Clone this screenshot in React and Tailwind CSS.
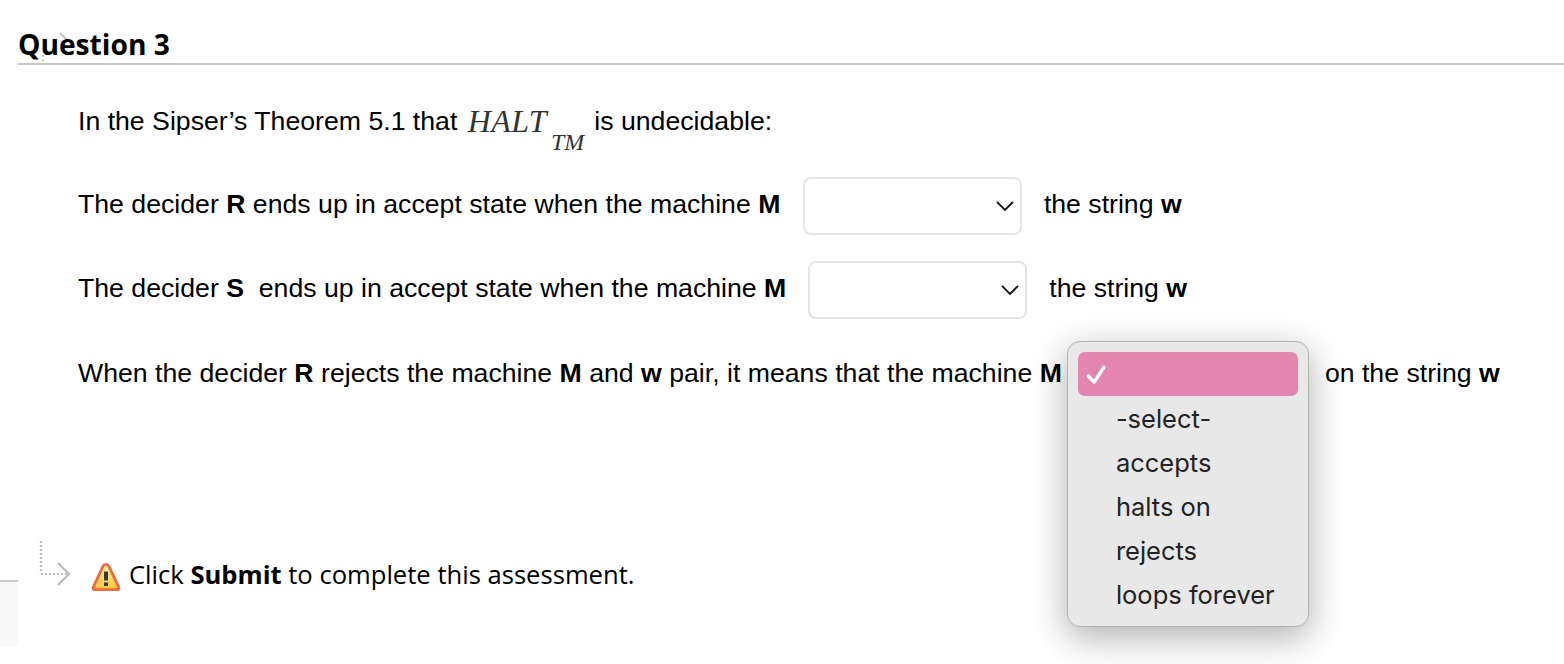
import { useState } from 'react'

const OPTIONS = ['', '-select-', 'accepts', 'halts on', 'rejects', 'loops forever']

function Chevron() {
  return (
    <svg width="18" height="12" viewBox="0 0 18 12" fill="none" className="mr-[6px]">
      <path d="M1 1.8 9 9.8 17 1.8" stroke="#111" strokeWidth="1.9" />
    </svg>
  )
}

function SelectBox() {
  return (
    <button
      type="button"
      className="flex h-[58px] w-[219px] shrink-0 items-center justify-end rounded-[8px] border-2 border-[#e4e4e4] bg-white"
    >
      <Chevron />
    </button>
  )
}

function OptionMenu({ options, selected, onSelect }) {
  return (
    <ul className="absolute top-[-17px] left-0 h-[286px] w-[242px] rounded-[13px] border border-[#b4b4b4] bg-[#e8e8e8] px-[10px] py-[10px] font-['Inter',sans-serif] text-[25.5px] text-[#232323] shadow-[0_10px_36px_rgba(0,0,0,0.32)]">
      {options.map((label) => (
        <li
          key={label}
          onClick={() => onSelect(label)}
          className={`flex h-[44px] items-center rounded-[7px] pt-[2px] whitespace-nowrap ${label === selected ? 'bg-[#e385b1] text-white' : ''}`}
        >
          <span className="flex w-[38px] shrink-0 pl-[8px]">
            {label === selected && (
              <svg width="20" height="20" viewBox="0 0 20 20" fill="none">
                <path
                  d="M2.4 11 8 17.2 18 2.3"
                  stroke="#fff"
                  strokeWidth="3.4"
                  strokeLinecap="round"
                  strokeLinejoin="round"
                />
              </svg>
            )}
          </span>
          {label}
        </li>
      ))}
    </ul>
  )
}

function FlowArrow() {
  return (
    <svg width="32" height="46" viewBox="0 0 32 46" fill="none" stroke="#bcbcbc">
      <path d="M2 0V33" strokeWidth="2.4" strokeDasharray="2 2" />
      <path d="M2 33H29" strokeWidth="2" strokeDasharray="2 2" />
      <path d="M19 22 30 33 19 44" strokeWidth="2.2" />
    </svg>
  )
}

function WarningIcon() {
  return (
    <svg width="30" height="30" viewBox="0 0 30 30">
      <defs>
        <linearGradient id="warn" x1="0" y1="0" x2="0" y2="1">
          <stop offset="0" stopColor="#fff0a0" />
          <stop offset="1" stopColor="#fbc638" />
        </linearGradient>
      </defs>
      <path
        d="M15 2.4Q17 2.4 18 4.4L27.8 25.3Q28.5 27.6 26.3 27.6H3.7Q1.5 27.6 2.2 25.3L12 4.4Q13 2.4 15 2.4Z"
        fill="url(#warn)"
        stroke="#f2683f"
        strokeWidth="2.8"
        strokeLinejoin="round"
      />
      <path d="M13 9.5H17V18.5H13ZM13 20.5H17V24H13Z" fill="#333b3d" />
    </svg>
  )
}

export default function App() {
  const [answer, setAnswer] = useState('')

  return (
    <div className="relative h-[664px] w-[1564px] overflow-hidden bg-white font-['Liberation_Sans',Arial,sans-serif] text-[26.66px] leading-[30px] text-black">
      <svg className="absolute top-[31px] left-[41px]" width="32" height="32" fill="none" stroke="#c4c4c4">
        <path d="M2 24V32" strokeWidth="1.8" strokeDasharray="2 2" />
        <path d="M19 2 27 10" strokeWidth="2.2" />
      </svg>
      <header className="relative ml-[18px] h-[65px] border-b-2 border-[#c9c9c9] pt-[24px]">
        <h1 className="font-['Open_Sans','Noto_Sans',sans-serif] text-[28.2px] leading-[40px] font-bold">Question 3</h1>
      </header>

      <main className="ml-[78px] whitespace-pre">
        <p className="flex h-[112px] items-start pt-[41px]">
          <span>In the Sipser’s Theorem 5.1 that </span>
          <span className="ml-[3px] flex font-['Liberation_Serif',serif] text-[#333] italic">
            <span className="text-[32px] tracking-[0.4px]">HALT</span>
            <span className="mt-[21px] ml-[4px] text-[24px]">TM</span>
          </span>
          <span className="ml-[10px]">is undecidable:</span>
        </p>

        <div className="flex h-[58px] items-center">
          <span className="-mt-[4px]">The decider <b>R</b> ends up in accept state when the machine <b>M</b></span>
          <span className="w-[22.5px]" />
          <SelectBox />
          <span className="-mt-[4px] ml-[22px]">the string <b>w</b></span>
        </div>

        <div className="mt-[26px] flex h-[58px] items-center">
          <span className="-mt-[4px]">The decider <b>S</b>  ends up in accept state when the machine <b>M</b></span>
          <span className="w-[22px]" />
          <SelectBox />
          <span className="-mt-[4px] ml-[22px]">the string <b>w</b></span>
        </div>

        <div className="mt-[39px] flex h-[30px] items-center">
          <span>When the decider <b>R</b> rejects the machine <b>M</b> and <b>w</b> pair, it means that the machine <b>M</b></span>
          <div className="relative z-10 ml-[5px] h-[30px] w-[242px] shrink-0">
            <OptionMenu options={OPTIONS} selected={answer} onSelect={setAnswer} />
          </div>
          <span className="ml-[16px]">on the string <b>w</b></span>
        </div>
      </main>

      <footer className="mt-[152px] flex h-[106px] items-start">
        <div className="mt-[40px] h-[66px] w-[18px] border-t-2 border-[#c9c9c9] bg-[#f8f8f8]" />
        <div className="mt-[1px] ml-[21px]">
          <FlowArrow />
        </div>
        <div className="mt-[22px] ml-[20px]">
          <WarningIcon />
        </div>
        <p className="mt-[15px] ml-[8px] font-['Open_Sans','Noto_Sans',sans-serif] text-[25.6px] leading-[40px]">
          Click <b>Submit</b> to complete this assessment.
        </p>
      </footer>
    </div>
  )
}
